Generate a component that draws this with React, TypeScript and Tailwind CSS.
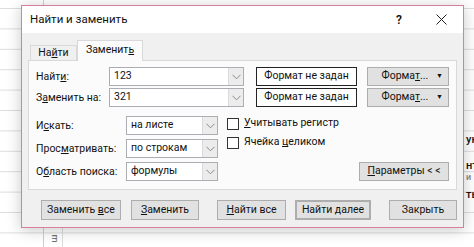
import type { ReactNode } from "react"

function Chevron() {
  return (
    <svg width="9" height="6" viewBox="0 0 9 6">
      <polyline points="0.5,0.8 4.5,4.8 8.5,0.8" fill="none" stroke="#8a8a8a" strokeWidth="1" />
    </svg>
  )
}

function Combo({ value, width }: { value: string; width: string }) {
  return (
    <div className={`${width} h-[19px] flex border border-[#abadb3] bg-white`}>
      <div className="flex-1 flex items-center pl-[4px] leading-none">{value}</div>
      <div className="w-[15px] flex items-center justify-center bg-[#ececec] border-l border-[#dadada]">
        <Chevron />
      </div>
    </div>
  )
}

function Btn({ children, className = "" }: { children: ReactNode; className?: string }) {
  return (
    <div
      className={`h-[19px] flex items-center justify-center bg-[#e1e1e1] border border-[#adadad] leading-none ${className}`}
    >
      <span>{children}</span>
    </div>
  )
}

function Check({ children }: { children: ReactNode }) {
  return (
    <div className="h-[13px] flex items-center gap-[5px] leading-none">
      <div className="w-[12px] h-[12px] border border-[#333] bg-white" />
      <span>{children}</span>
    </div>
  )
}

function FormatBox() {
  return (
    <>
      <div className="ml-[12px] w-[101px] h-[19px] flex items-center justify-center border border-[#222] bg-white leading-none">
        Формат не задан
      </div>
      <div className="ml-[10px] w-[82px] h-[19px] flex items-center justify-center bg-[#e1e1e1] border border-[#adadad] leading-none relative">
        <span className="mr-[6px]">
          Форма<u>т</u>...
        </span>
        <span className="absolute right-[5px] text-[7px]">▼</span>
      </div>
    </>
  )
}

const rowsY = Array.from({ length: 12 }, (_, i) => 8 + i * 20.4)

export default function App() {
  return (
    <div
      className="relative w-[474px] h-[247px] overflow-hidden bg-white text-[10.5px] text-[#111]"
      style={{ fontFamily: 'Roboto, "Noto Sans", sans-serif' }}
    >
      {/* spreadsheet behind the dialog */}
      <svg className="absolute inset-0" width="474" height="247">
        {rowsY.map((y) => (
          <line key={y} x1="0" x2="474" y1={y + 0.5} y2={y + 0.5} stroke="#dedede" />
        ))}
        <line x1="43.5" x2="43.5" y1="0" y2="247" stroke="#cfcfcf" />
        <line x1="62.5" x2="62.5" y1="228" y2="247" stroke="#dcdcdc" />
      </svg>
      <div className="absolute left-[466px] top-[134px] flex flex-col text-[11px] leading-[12px] font-medium">
        <span>ук</span>
        <span className="mt-[14px]">нт</span>
        <span className="text-[#888] text-[9px] leading-[9px] mt-[1px]">и</span>
        <span className="mt-[7px]">ть</span>
      </div>
      <div className="absolute left-[50px] top-[232px] text-[9px] text-[#555] rotate-90">m</div>

      {/* dialog */}
      <div className="absolute left-[21px] top-[5px] w-[443px] h-[223px] border border-[#d87f9d] bg-[#f0f0f0] shadow-[0_2px_14px_rgba(0,0,0,0.22)] flex flex-col">
        <div className="h-[27px] bg-white flex items-center pl-[8px] text-[11.5px]">
          <span className="flex-1">Найти и заменить</span>
          <span className="text-[12px] font-semibold mr-[34px]">?</span>
          <svg width="11" height="11" viewBox="0 0 11 11" className="mr-[16px]">
            <path d="M0.5 0.5 L10.5 10.5 M10.5 0.5 L0.5 10.5" stroke="#222" strokeWidth="1" />
          </svg>
        </div>

        <div className="flex-1 flex flex-col px-[6px] pt-[7px]">
          {/* tabs */}
          <div className="flex items-end h-[20px] pl-[2px] relative z-10">
            <div className="w-[47px] h-[15px] flex items-center justify-center border border-b-0 border-[#d9d9d9] bg-[#f0f0f0] leading-none">
              <span>
                На<u>й</u>ти
              </span>
            </div>
            <div className="w-[66px] h-[21px] -mb-[1px] flex items-center justify-center border border-b-0 border-[#d9d9d9] bg-[#fbfbfb] leading-none pb-[2px]">
              <span>
                Заменит<u>ь</u>
              </span>
            </div>
          </div>

          {/* panel */}
          <div className="h-[130px] border border-[#d9d9d9] bg-[#fbfbfb] pl-[7px] pr-[7px] pt-[6px] flex flex-col">
            <div className="flex items-center h-[19px]">
              <div className="w-[73px]">
                Найт<u>и</u>:
              </div>
              <Combo value="123" width="w-[135px]" />
              <FormatBox />
            </div>
            <div className="flex items-center h-[19px] mt-[2px]">
              <div className="w-[73px]">
                З<u>а</u>менить на:
              </div>
              <Combo value="321" width="w-[135px]" />
              <FormatBox />
            </div>

            <div className="flex mt-[9px]">
              <div className="flex flex-col gap-[4px]">
                <div className="flex items-center">
                  <div className="w-[90px]">
                    И<u>с</u>кать:
                  </div>
                  <Combo value="на листе" width="w-[92px]" />
                </div>
                <div className="flex items-center">
                  <div className="w-[90px]">
                    Прос<u>м</u>атривать:
                  </div>
                  <Combo value="по строкам" width="w-[92px]" />
                </div>
                <div className="flex items-center">
                  <div className="w-[90px]">
                    О<u>б</u>ласть поиска:
                  </div>
                  <Combo value="формулы" width="w-[92px]" />
                </div>
              </div>
              <div className="ml-[9px] flex flex-col gap-[6px] flex-1 pt-[1px]">
                <Check>
                  <u>У</u>читывать регистр
                </Check>
                <Check>
                  Ячейка <u>ц</u>еликом
                </Check>
              </div>
              <Btn className="self-end w-[90px]">
                <u>П</u>араметры &lt; &lt;
              </Btn>
            </div>
          </div>

          {/* bottom buttons */}
          <div className="flex mt-[10px] pl-[13px]">
            <Btn className="w-[80px] h-[20px]">
              Заменить <u>в</u>се
            </Btn>
            <Btn className="ml-[10px] w-[68px] h-[20px]">
              <u>З</u>аменить
            </Btn>
            <Btn className="ml-[18px] w-[69px] h-[20px]">
              <u>Н</u>айти все
            </Btn>
            <Btn className="ml-[9px] w-[76px] h-[20px] border-2 border-[#1a73c8]">
              Найти <u>д</u>алее
            </Btn>
            <Btn className="ml-[18px] w-[68px] h-[20px]">Закрыть</Btn>
          </div>
        </div>
      </div>
    </div>
  )
}
